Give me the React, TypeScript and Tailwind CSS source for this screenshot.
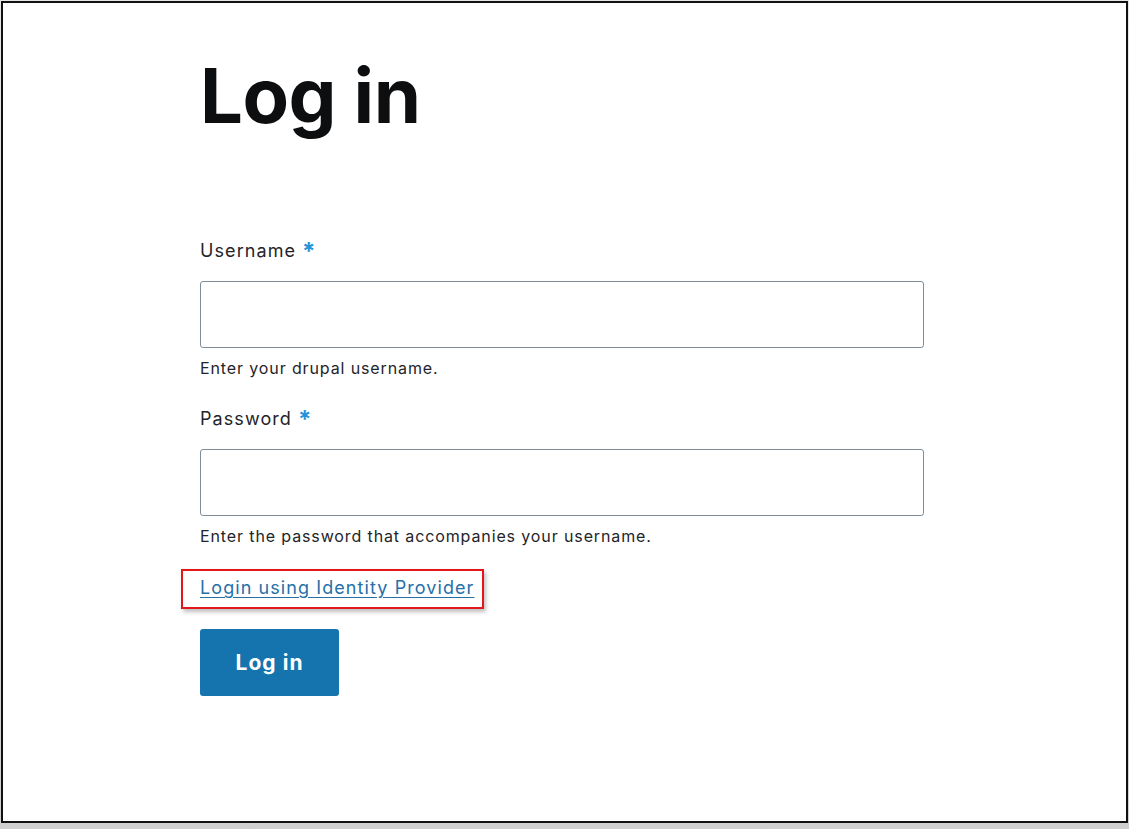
const font = { fontFamily: "Inter, 'Liberation Sans', sans-serif" };

type FieldProps = {
  id: string;
  label: string;
  type: string;
  help: string;
};

const Field = ({ id, label, type, help }: FieldProps) => (
  <div className="flex flex-col">
    <label htmlFor={id} className="h-[27px] text-[18px] leading-[27px] tracking-[0.06em] text-[#232429]">
      {label}
      <span className="ml-[6px] align-[-3px] text-[24px] leading-none font-bold text-[#2494db]">*</span>
    </label>
    <input
      id={id}
      type={type}
      className="mt-[17px] h-[67px] w-[724px] rounded-[3px] border border-[#7f8c99] bg-white px-4 text-[18px] outline-none"
    />
    <p className="mt-[9px] text-[16px] leading-[22px] tracking-[0.055em] text-[#232429]">{help}</p>
  </div>
);

export default function App() {
  return (
    <div
      className="h-[829px] w-[1129px] bg-gradient-to-b from-[#e6e6e6] to-[#cfcfcf] pl-[1px] pt-[1px] pb-[5px]"
      style={font}
    >
      <div className="h-[822px] w-[1127px] border-2 border-[#111] bg-white pl-[197px] pt-[54px]">
        <h1 className="text-[76px] font-bold leading-[76px] tracking-[-0.5px] text-[#0d0e10]">Log in</h1>

        <form className="mt-[104px] flex flex-col">
          <Field id="username" label="Username" type="text" help="Enter your drupal username." />
          <div className="mt-[26px]">
            <Field
              id="password"
              label="Password"
              type="password"
              help="Enter the password that accompanies your username."
            />
          </div>

          <div className="relative mt-[27px] self-start">
            <a
              href="#"
              className="text-[18px] leading-[27px] tracking-[0.06em] text-[#2670a8] underline underline-offset-[3px]"
            >
              Login using Identity Provider
            </a>
            {/* annotation box */}
            <div className="pointer-events-none absolute -left-[19px] -right-[10px] -top-[5px] -bottom-[8px] border-2 border-[#e4161c] shadow-[2px_3px_4px_rgba(0,0,0,0.25)]" />
          </div>

          <button
            type="submit"
            className="mt-[28px] h-[67px] w-[139px] self-start rounded-[3px] bg-[#1574ad] text-[21px] font-bold tracking-[0.05em] text-white"
          >
            Log in
          </button>
        </form>
      </div>
    </div>
  );
}
